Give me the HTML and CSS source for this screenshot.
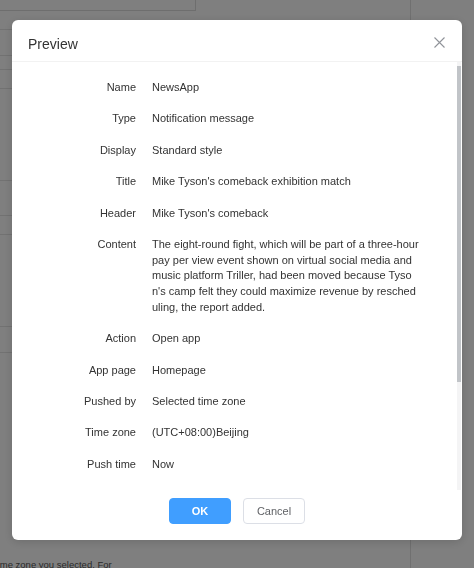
FILE: index.html
```html
<!DOCTYPE html>
<html lang="en">
<head>
    <meta charset="UTF-8">
    <meta name="viewport" content="width=device-width, initial-scale=1.0">
    <title>Push Preview</title>
    <link rel="stylesheet" href="styles.css">
</head>
<body>
    <div class="page">
        <div class="page-main">
            <div class="search-box"></div>
            <div class="form-list">
                <div class="form-row row-xs"></div>
                <div class="form-row row-sm"></div>
                <div class="form-row row-xxs"></div>
                <div class="form-row row-xs"></div>
                <div class="form-row row-xl"></div>
                <div class="form-row row-md"></div>
                <div class="form-row row-xs"></div>
                <div class="form-row row-xl"></div>
                <div class="form-row row-sm"></div>
            </div>
            <p class="page-hint">time zone you selected. For example, a message pushed at 08:00</p>
        </div>
        <div class="page-side"></div>
    </div>

    <div class="mask">
        <div class="dialog">
            <div class="dialog-header">
                <span class="dialog-title">Preview</span>
                <button class="dialog-close" aria-label="Close">
                    <svg width="11" height="11" viewBox="0 0 11 11">
                        <path d="M0.5 0.5 L10.5 10.5 M10.5 0.5 L0.5 10.5" stroke="#909399" stroke-width="1.1" fill="none"/>
                    </svg>
                </button>
            </div>
            <div class="dialog-body">
                <div class="preview-list">
                    <div class="preview-row">
                        <div class="preview-label">Name</div>
                        <div class="preview-value">NewsApp</div>
                    </div>
                    <div class="preview-row">
                        <div class="preview-label">Type</div>
                        <div class="preview-value">Notification message</div>
                    </div>
                    <div class="preview-row">
                        <div class="preview-label">Display</div>
                        <div class="preview-value">Standard style</div>
                    </div>
                    <div class="preview-row">
                        <div class="preview-label">Title</div>
                        <div class="preview-value">Mike Tyson's comeback exhibition match</div>
                    </div>
                    <div class="preview-row">
                        <div class="preview-label">Header</div>
                        <div class="preview-value">Mike Tyson's comeback</div>
                    </div>
                    <div class="preview-row">
                        <div class="preview-label">Content</div>
                        <div class="preview-value">The eight-round fight, which will be part of a three-hour<br>pay per view event shown on virtual social media and<br>music platform Triller, had been moved because Tyso<br>n's camp felt they could maximize revenue by resched<br>uling, the report added.</div>
                    </div>
                    <div class="preview-row">
                        <div class="preview-label">Action</div>
                        <div class="preview-value">Open app</div>
                    </div>
                    <div class="preview-row">
                        <div class="preview-label">App page</div>
                        <div class="preview-value">Homepage</div>
                    </div>
                    <div class="preview-row">
                        <div class="preview-label">Pushed by</div>
                        <div class="preview-value">Selected time zone</div>
                    </div>
                    <div class="preview-row">
                        <div class="preview-label">Time zone</div>
                        <div class="preview-value">(UTC+08:00)Beijing</div>
                    </div>
                    <div class="preview-row">
                        <div class="preview-label">Push time</div>
                        <div class="preview-value">Now</div>
                    </div>
                </div>
                <div class="scrollbar"><div class="scrollbar-thumb"></div></div>
            </div>
            <div class="dialog-footer">
                <button class="btn btn-primary">OK</button>
                <button class="btn">Cancel</button>
            </div>
        </div>
    </div>
</body>
</html>
```

FILE: styles.css
```css
html, body {
    margin: 0;
    padding: 0;
    height: 100%;
    overflow: hidden;
}

body {
    font-family: "Liberation Sans", Arial, sans-serif;
    font-size: 11px;
    color: #333333;
    background: #ffffff;
}

/* page behind the dialog */
.page {
    display: flex;
    height: 568px;
}

.page-main {
    width: 410px;
    border-right: 1px solid #e0e0e0;
}

.page-side {
    flex: 1;
}

.search-box {
    width: 196px;
    height: 11px;
    box-sizing: border-box;
    border-right: 1px solid #dcdcdc;
    border-bottom: 1px solid #dcdcdc;
}

.form-row {
    box-sizing: border-box;
    border-bottom: 1px solid #e4e4e4;
}

.row-xxs { height: 14px; }
.row-xs { height: 19px; }
.row-sm { height: 26px; }
.row-md { height: 35px; }
.row-xl { height: 92px; }

.page-hint {
    width: 122px;
    margin: 205px 0 0 -5px;
    font-size: 9.5px;
    line-height: 14px;
    color: #555555;
}

/* dialog */
.mask {
    position: fixed;
    inset: 0;
    background: rgba(0, 0, 0, 0.5);
    display: flex;
    justify-content: center;
    align-items: flex-start;
    padding-top: 20px;
}

.dialog {
    width: 450px;
    height: 520px;
    background: #ffffff;
    border-radius: 6px;
    box-shadow: 0 2px 10px rgba(0, 0, 0, 0.15);
    display: flex;
    flex-direction: column;
    overflow: hidden;
}

.dialog-header {
    display: flex;
    justify-content: space-between;
    align-items: center;
    padding: 14px 17px 7px 16px;
    border-bottom: 1px solid #f2f2f2;
}

.dialog-title {
    font-size: 14px;
    line-height: 20px;
    color: #333333;
}

.dialog-close {
    border: none;
    background: none;
    padding: 0;
    width: 11px;
    height: 11px;
    margin-top: -3px;
    cursor: pointer;
    display: flex;
}

.dialog-body {
    flex: 1;
    position: relative;
    overflow: hidden;
}

.preview-list {
    padding-top: 18px;
}

.preview-row {
    display: flex;
    line-height: 15.7px;
    margin-bottom: 15.7px;
}

.preview-label {
    width: 140px;
    flex-shrink: 0;
    box-sizing: border-box;
    padding-right: 16px;
    text-align: right;
    color: #333333;
}

.preview-value {
    flex: 1;
    color: #333333;
    white-space: nowrap;
}

/* drawn scrollbar of the preview list */
.scrollbar {
    position: absolute;
    top: 0;
    right: 1px;
    bottom: 0;
    width: 4px;
    background: #f4f4f5;
}

.scrollbar-thumb {
    margin-top: 4px;
    height: 316px;
    background: #c1c4c8;
}

.dialog-footer {
    display: flex;
    justify-content: center;
    gap: 12px;
    padding: 8px 0 16px;
}

.btn {
    width: 62px;
    height: 26px;
    border: 1px solid #dcdfe6;
    border-radius: 4px;
    background: #ffffff;
    color: #606266;
    font-family: inherit;
    font-size: 11px;
    cursor: pointer;
}

.btn-primary {
    background: #409eff;
    border-color: #409eff;
    color: #ffffff;
    font-weight: 700;
}
```
